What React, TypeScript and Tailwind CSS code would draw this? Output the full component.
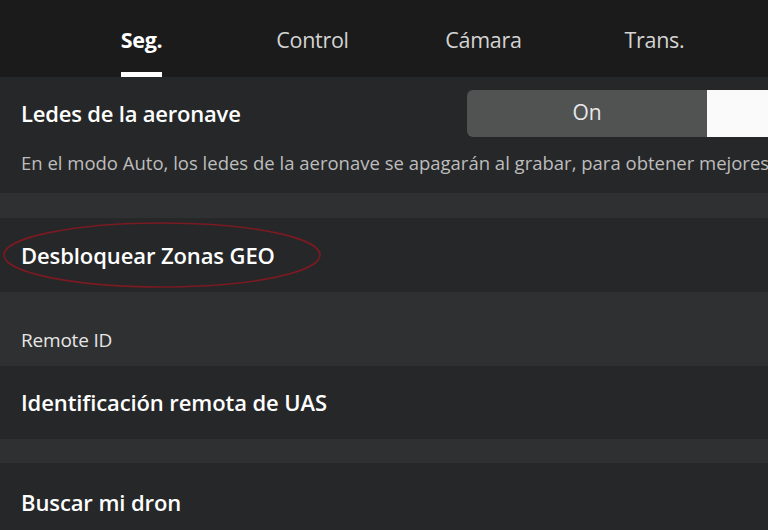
const tabs = ["Seg.", "Control", "Cámara", "Trans."];

function Row({ children, className = "" }: { children: React.ReactNode; className?: string }) {
  return <div className={`flex items-center bg-[#262728] px-[21px] ${className}`}>{children}</div>;
}

export default function App() {
  return (
    <div
      className="h-[530px] w-[768px] overflow-hidden bg-[#262728] text-white"
      style={{ fontFamily: '"Open Sans", "Liberation Sans", sans-serif' }}
    >
      <header className="flex h-[77px] bg-[#1b1b1b] pl-[56px]">
        {tabs.map((t, i) => (
          <div key={t} className="flex w-[171px] justify-center">
            <div className="relative flex flex-col items-center pt-[25px]">
              <span
                className={`text-[21.5px] leading-[29px] tracking-[-0.3px] ${
                  i === 0 ? "font-bold text-white" : "text-[#d4d4d4]"
                }`}
              >
                {t}
              </span>
              {i === 0 && <span className="absolute bottom-0 left-0 h-[5px] w-full bg-white" />}
            </div>
          </div>
        ))}
      </header>

      <div className="h-[116px] overflow-hidden bg-[#262728] pl-[21px]">
        <div className="flex h-[72px] items-center justify-between">
          <span className="text-[22px] font-semibold tracking-[-0.2px]">Ledes de la aeronave</span>
          <div className="flex h-[47px] w-[301px] overflow-hidden rounded-l-[6px]">
            <div className="flex w-[240px] items-center justify-center bg-[#515252] text-[21px] text-[#e8e8e8]">
              On
            </div>
            <div className="flex-1 bg-[#fafafa]" />
          </div>
        </div>
        <p className="whitespace-nowrap pt-[2px] text-[18.5px] leading-[24px] text-[#bdbdbd]">
          En el modo Auto, los ledes de la aeronave se apagarán al grabar, para obtener mejores resultados.
        </p>
      </div>

      <div className="h-[25px] bg-[#2f3031]" />

      <Row className="relative h-[74px]">
        <span className="text-[22px] font-semibold tracking-[-0.1px]">Desbloquear Zonas GEO</span>
        <svg className="absolute left-[2px] top-[3px]" width="320" height="68" viewBox="0 0 320 68">
          <ellipse cx="160" cy="34" rx="158" ry="32" fill="none" stroke="#7a1a22" strokeWidth="1.6" />
        </svg>
      </Row>

      <div className="flex h-[74px] items-end bg-[#2f3031] px-[21px] pb-[12px]">
        <span className="text-[19px] tracking-[-0.2px] text-[#e6e6e6]">Remote ID</span>
      </div>

      <Row className="h-[73px]">
        <span className="text-[22px] font-semibold tracking-[-0.1px]">Identificación remota de UAS</span>
      </Row>

      <div className="h-[24px] bg-[#2f3031]" />

      <Row className="h-[78px]">
        <span className="text-[22px] font-semibold tracking-[-0.1px]">Buscar mi dron</span>
      </Row>
    </div>
  );
}
